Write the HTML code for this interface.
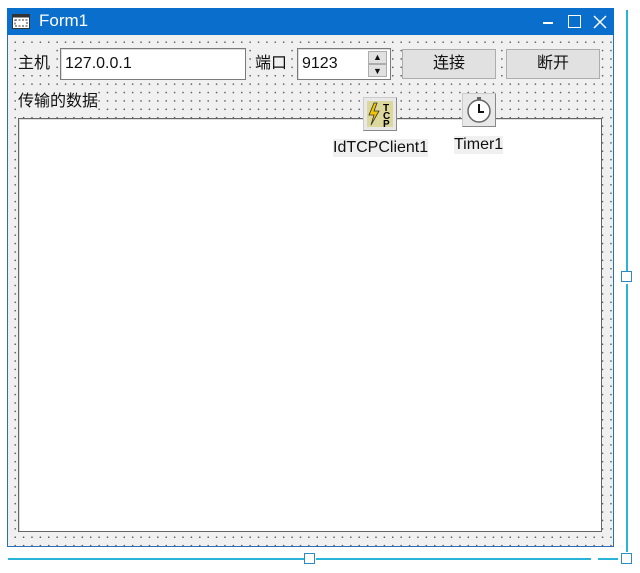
<!DOCTYPE html>
<html><head><meta charset="utf-8"><style>
*{margin:0;padding:0;box-sizing:border-box}
body{width:640px;height:573px;background:#fff;position:relative;overflow:hidden;font-family:"Liberation Sans","Noto Sans CJK SC",sans-serif;font-size:15px;color:#111}
.a{position:absolute}
#win{left:7px;top:8px;width:607px;height:539px;border:1px solid #2a6fb8;background:#f0f0f0}
#title{left:7px;top:8px;width:607px;height:27px;background:#0a6fcc;color:#fff}
#dots{left:8px;top:35px;width:605px;height:511px;background-image:radial-gradient(circle,#555 0.6px,transparent 1px);background-size:8.4px 8.4px;background-position:3px 3px}
.edit{background:#fff;border:1px solid #7a7a7a;box-shadow:inset 1px 1px 0 #ddd}
.btn{background:#e1e1e1;border:1px solid #adadad;text-align:center;line-height:27px;font-size:16px}
.cy{background:#29b3d6}
.h{width:11px;height:11px;border:1.5px solid #2b8cc4;background:#fff}
.lb{font-size:16px;background:#f0f0f0}
</style></head><body>
<div class="a" id="win"></div>
<div class="a" id="dots"></div>
<div class="a" id="title">
 <svg class="a" style="left:5px;top:6px" width="18" height="15"><rect x="0.5" y="0.5" width="17" height="14" fill="#fff" stroke="#333"/><rect x="0.5" y="0.5" width="17" height="3" fill="#333"/><rect x="3" y="6" width="12" height="6" fill="none" stroke="#333" stroke-dasharray="2 1.5"/></svg>
 <div class="a" style="left:32px;top:3px;font-size:17px">Form1</div>
 <div class="a" style="left:536px;top:14px;width:10px;height:1.5px;background:#fff"></div>
 <div class="a" style="left:561px;top:7px;width:13px;height:13px;border:1.5px solid #fff"></div>
 <svg class="a" style="left:586px;top:7px" width="14" height="14"><path d="M1 1L13 13M13 1L1 13" stroke="#fff" stroke-width="1.5"/></svg>
</div>
<div class="a lb" style="left:18px;top:49px">主机</div>
<div class="a edit" style="left:60px;top:48px;width:186px;height:32px"><span class="a" style="left:4px;top:6px;font-size:16px">127.0.0.1</span></div>
<div class="a lb" style="left:255px;top:49px">端口</div>
<div class="a edit" style="left:297px;top:48px;width:94px;height:32px"><span class="a" style="left:4px;top:6px;font-size:16px">9123</span>
 <div class="a btn" style="left:70px;top:2px;width:19px;height:13px;line-height:10px;font-size:9px">▲</div>
 <div class="a btn" style="left:70px;top:15px;width:19px;height:13px;line-height:12px;font-size:9px">▼</div>
</div>
<div class="a btn" style="left:402px;top:49px;width:94px;height:30px">连接</div>
<div class="a btn" style="left:506px;top:49px;width:94px;height:30px">断开</div>
<div class="a lb" style="left:18px;top:87px">传输的数据</div>
<div class="a edit" style="left:18px;top:118px;width:584px;height:414px;border-color:#666"></div>
<div class="a" style="left:363px;top:97px;width:34px;height:34px;background:#e8e8e8;border:1px solid #ccc;border-right-color:#888;border-bottom-color:#888">
 <svg width="32" height="32"><rect x="3" y="3" width="26" height="26" fill="#dcd79a"/><path d="M10 5L5 17H10L7 27L15 13H10L13 5Z" fill="#f2c500" stroke="#333" stroke-width="0.8"/><text x="19" y="13" font-size="10" font-weight="bold" font-family="Liberation Sans">T</text><text x="19" y="21" font-size="10" font-weight="bold" font-family="Liberation Sans">C</text><text x="19" y="29" font-size="10" font-weight="bold" font-family="Liberation Sans">P</text></svg>
</div>
<div class="a lb" style="left:333px;top:139px">IdTCPClient1</div>
<div class="a" style="left:462px;top:93px;width:34px;height:34px;background:#e8e8e8;border:1px solid #ccc;border-right-color:#888;border-bottom-color:#888">
 <svg width="32" height="32"><circle cx="16" cy="17" r="11" fill="#fff" stroke="#666" stroke-width="1.5"/><rect x="14" y="3" width="4" height="3" fill="#666"/><path d="M16 10V18H21" stroke="#111" stroke-width="2" fill="none"/></svg>
</div>
<div class="a lb" style="left:454px;top:136px">Timer1</div>
<div class="a cy" style="left:626px;top:10px;width:2px;height:262px"></div>
<div class="a cy" style="left:626px;top:284px;width:2px;height:268px"></div>
<div class="a h" style="left:621px;top:271px"></div>
<div class="a cy" style="left:8px;top:558px;width:297px;height:2px"></div>
<div class="a cy" style="left:316px;top:558px;width:275px;height:2px"></div>
<div class="a cy" style="left:598px;top:558px;width:20px;height:2px"></div>
<div class="a h" style="left:304px;top:553px"></div>
<div class="a h" style="left:621px;top:553px"></div>
</body></html>
